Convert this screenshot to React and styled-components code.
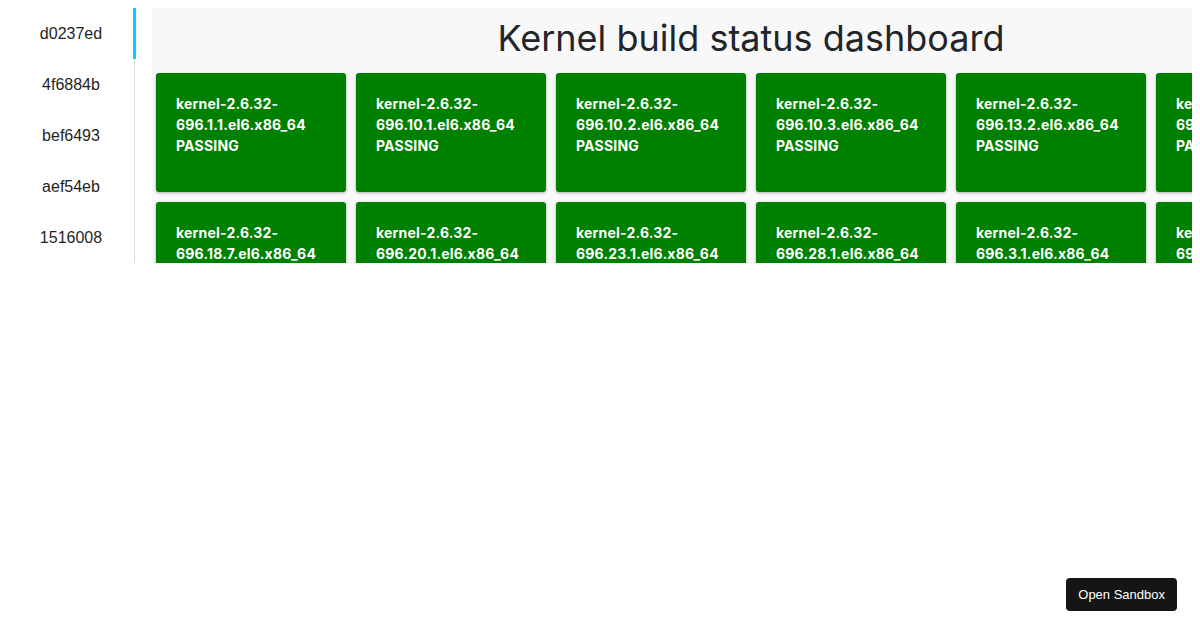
import React from "react";
import styled, { createGlobalStyle } from "styled-components";

const Global = createGlobalStyle`
  html, body { margin: 0; padding: 0; background: #fff; }
  body { margin: 8px; font-family: "Liberation Sans", Arial, sans-serif; color: #222; }
`;

const Layout = styled.div`
  display: flex;
  align-items: flex-start;
  gap: 16px;
`;

const Sidebar = styled.nav`
  width: 128px;
  flex: 0 0 128px;
  display: flex;
  flex-direction: column;
  position: relative;
  &::after {
    content: "";
    position: absolute;
    top: 0;
    bottom: 0;
    right: 1px;
    width: 1px;
    background: #dcdcdc;
  }
`;

const NavItem = styled.a`
  display: flex;
  align-items: center;
  justify-content: center;
  height: 51px;
  padding-left: 1px;
  font-size: 16px;
  color: #1f1f1f;
  text-decoration: none;
  position: relative;
  z-index: 1;
  border-right: 3px solid ${(p) => (p.$active ? "#00d0ff" : "transparent")};
`;

const Main = styled.main`
  flex: 1;
  height: 255px;
  overflow: hidden;
  background: #f8f8f8;
`;

const Inner = styled.div`
  width: 1198px;
`;

const Title = styled.h1`
  margin: 0;
  height: 60px;
  line-height: 60px;
  text-align: center;
  font-family: Inter, "Liberation Sans", sans-serif;
  font-weight: 400;
  font-size: 36px;
  color: #212529;
`;

const Grid = styled.div`
  display: grid;
  grid-template-columns: repeat(6, 190px);
  gap: 10px;
  padding: 5px 4px;
`;

const Card = styled.div`
  height: 119px;
  box-sizing: border-box;
  padding: 20px;
  background: ${(p) => (p.$ok ? "#008000" : "#c00000")};
  border-radius: 3px;
  box-shadow: 0 1px 3px rgba(0, 0, 0, 0.3);
  color: #fff;
  font-family: Inter, "Liberation Sans", sans-serif;
  font-weight: 700;
  font-size: 14px;
  letter-spacing: 0.2px;
  line-height: 21px;
`;

const Line = styled.div``;

const SandboxButton = styled.button`
  position: fixed;
  right: 23px;
  bottom: 19px;
  height: 33px;
  padding: 0 12px;
  background: #151515;
  color: #fff;
  border: none;
  border-radius: 4px;
  font-family: "Liberation Sans", Arial, sans-serif;
  font-size: 13px;
`;

const commits = ["d0237ed", "4f6884b", "bef6493", "aef54eb", "1516008"];
const builds = [
  "696.1.1", "696.10.1", "696.10.2", "696.10.3", "696.13.2", "696.16.1",
  "696.18.7", "696.20.1", "696.23.1", "696.28.1", "696.3.1", "696.30.1",
  "696.6.3", "754.10.1", "754.11.1", "754.14.2", "754.15.3", "754.17.1",
];

export default function App() {
  return (
    <>
      <Global />
      <Layout>
        <Sidebar>
          {commits.map((c, i) => (
            <NavItem key={c} href="#" $active={i === 0}>
              {c}
            </NavItem>
          ))}
        </Sidebar>
        <Main>
          <Inner>
            <Title>Kernel build status dashboard</Title>
            <Grid>
              {builds.map((b) => (
                <Card key={b} $ok>
                  <Line>kernel-2.6.32-</Line>
                  <Line>{b}.el6.x86_64</Line>
                  <Line>PASSING</Line>
                </Card>
              ))}
            </Grid>
          </Inner>
        </Main>
      </Layout>
      <SandboxButton>Open Sandbox</SandboxButton>
    </>
  );
}
